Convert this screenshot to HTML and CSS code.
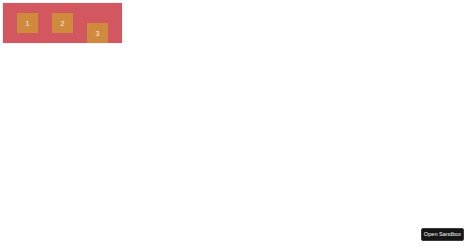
FILE: index.html
```html
<!DOCTYPE html>
<html>
<head>
<meta charset="utf-8">
<link rel="stylesheet" href="styles.css">
</head>
<body>
<div class="container">
  <div class="item">1</div>
  <div class="item">2</div>
  <div class="item item-end">3</div>
</div>
<a class="sandbox" href="#">Open Sandbox</a>
</body>
</html>
```
FILE: styles.css
```css
html, body {
  margin: 0;
  padding: 0;
  background: #ffffff;
  width: 474px;
  height: 248px;
  overflow: hidden;
  font-family: "Liberation Sans", Arial, sans-serif;
}
body {
  position: relative;
}
.container {
  margin: 3px 0 0 3px;
  width: 119px;
  height: 40px;
  box-sizing: border-box;
  background: #d2575f;
  display: flex;
  align-items: flex-start;
  padding: 10px 0 0 14px;
  gap: 14px;
  box-shadow: 0 0 1px rgba(0,0,0,0.25);
}
.item {
  width: 21px;
  height: 20px;
  background: #d08a3e;
  color: #f6ece0;
  font-size: 7px;
  display: flex;
  align-items: center;
  justify-content: center;
}
.item-end {
  align-self: flex-end;
}
.sandbox {
  position: absolute;
  left: 421px;
  top: 228px;
  width: 43px;
  height: 13px;
  box-sizing: border-box;
  background: #151515;
  border: 1px solid #3a3a3a;
  border-radius: 2px;
  color: #ffffff;
  font-size: 5.6px;
  line-height: 11px;
  text-align: center;
  text-decoration: none;
  white-space: nowrap;
}
```
